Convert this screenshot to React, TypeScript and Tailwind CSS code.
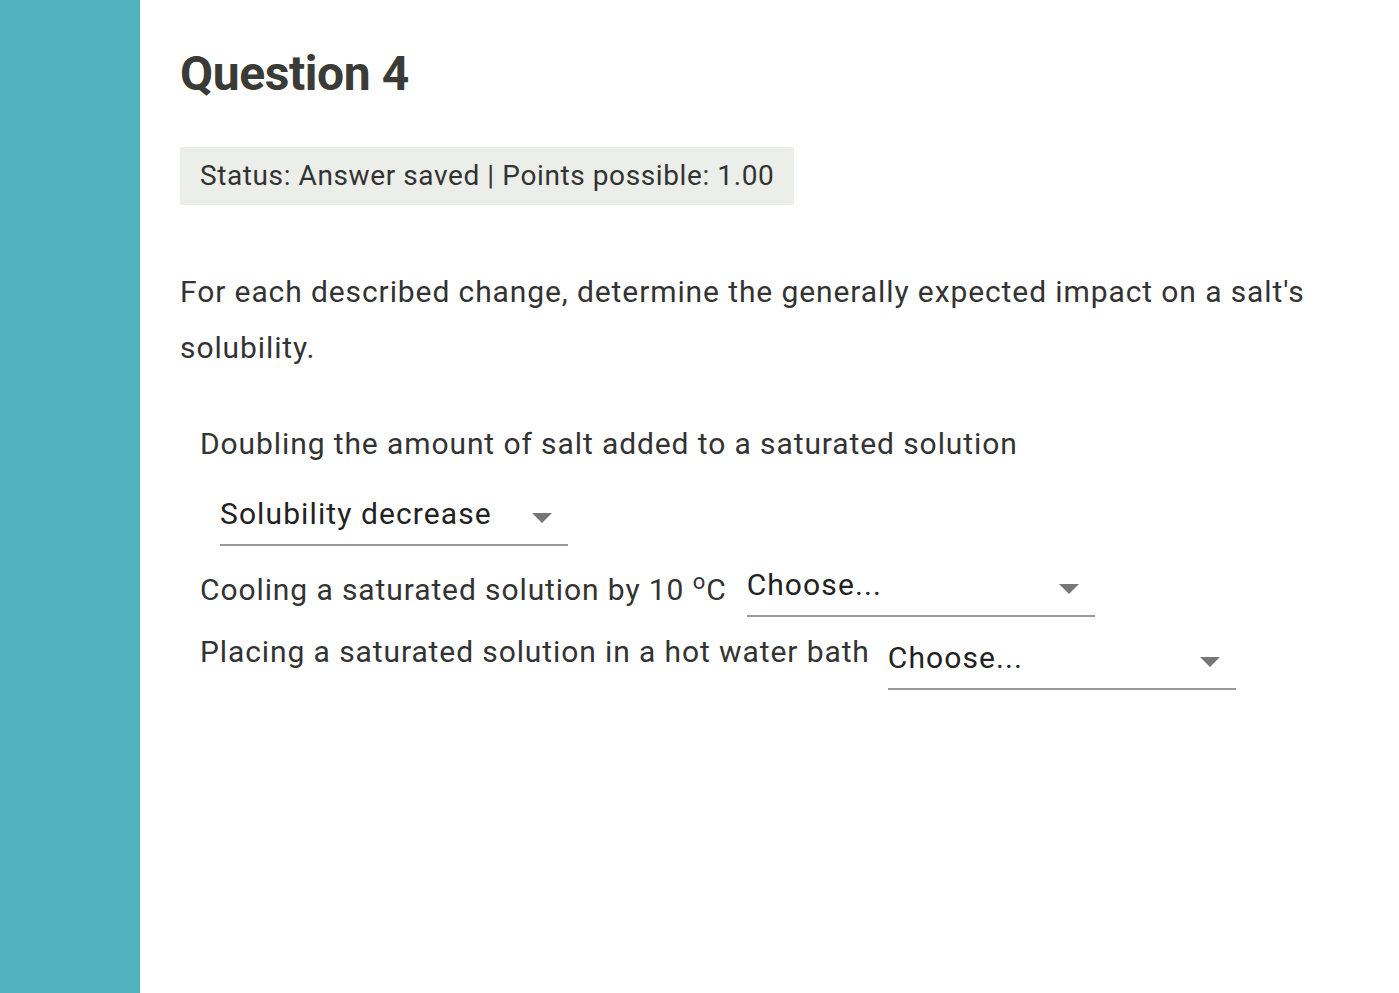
import React from 'react';

const font = { fontFamily: 'Roboto, "Liberation Sans", sans-serif' };

function Caret() {
  return (
    <svg width="20" height="10" viewBox="0 0 20 10" aria-hidden className="shrink-0">
      <path d="M0 0 L20 0 L10 10 Z" fill="#777" />
    </svg>
  );
}

function Choice({ value, className = '' }: { value: string; className?: string }) {
  return (
    <div
      className={`flex h-[52px] w-[348px] shrink-0 items-start justify-between border-b-2 border-[#999] pr-4 pb-[10px] ${className}`}
    >
      <span className="text-[30px] leading-[40px] tracking-[1.1px] text-[#222]">{value}</span>
      <span className="mt-[19px]">
        <Caret />
      </span>
    </div>
  );
}

export default function App() {
  return (
    <div className="flex min-h-[993px] bg-white" style={font}>
      <aside className="w-[140px] shrink-0 bg-[#52b1bf]" />
      <main className="flex-1 pl-10 pr-8">
        <h1 className="mt-[50px] text-[48px] leading-[48px] font-bold tracking-[-0.4px] text-[#3a3a36]">
          Question 4
        </h1>
        <div className="mt-[49px] inline-block h-[58px] bg-[#eceee9] px-5 text-[28px] leading-[58px] tracking-[0.6px] text-[#333]">
          Status: Answer saved | Points possible: 1.00
        </div>
        <p className="mt-[59px] max-w-[1180px] text-[30px] leading-[56px] tracking-[0.9px] text-[#333]">
          For each described change, determine the generally expected impact on a salt's solubility.
        </p>
        <div className="pl-5 text-[30px] leading-[40px] tracking-[0.9px] text-[#333]">
          <div className="mt-[48px]">Doubling the amount of salt added to a saturated solution</div>
          <Choice value="Solubility decrease" className="ml-5 mt-[30px]" />
          <div className="mt-[19px] flex items-start">
            <span className="mt-[5px]">
              Cooling a saturated solution by 10 <sup className="text-[22px]">o</sup>C
            </span>
            <Choice value="Choose..." className="ml-5" />
          </div>
          <div className="flex items-start">
            <span className="mt-[15px]">Placing a saturated solution in a hot water bath</span>
            <Choice value="Choose..." className="ml-[18px] mt-[21px]" />
          </div>
        </div>
      </main>
    </div>
  );
}
